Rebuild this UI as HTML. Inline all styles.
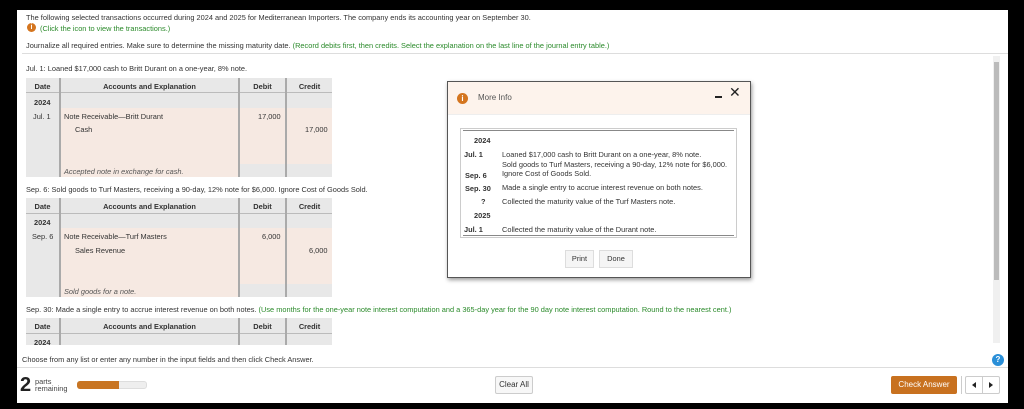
<!DOCTYPE html>
<html><head><meta charset="utf-8"><style>
*{margin:0;padding:0;box-sizing:border-box}
body{width:1024px;height:409px;background:#000;position:relative;overflow:hidden;font-family:"Liberation Sans",Arial,sans-serif;color:#333}
.a{position:absolute;white-space:nowrap}
.t{font-size:7.4px}
.g{color:#2a8a2a}
.bg{background:#e8e8e8}
.pk{background:#f6e9e2}
.vl{position:absolute;width:2px;background:#aaa}
.hd{font-size:7.4px;font-weight:bold;color:#333;text-align:center}
</style></head><body>
<div class="a" style="left:17px;top:10px;width:991px;height:393px;background:#fff"></div>
<div class="a t" style="left:26px;top:13px">The following selected transactions occurred during 2024 and 2025 for Mediterranean Importers. The company ends its accounting year on September 30.</div>
<div class="a" style="left:27px;top:23px;width:9px;height:9px;border-radius:50%;background:#d4751f;color:#fff;font-size:7px;font-weight:bold;text-align:center;line-height:9px">i</div>
<div class="a t g" style="left:40px;top:24px">(Click the icon to view the transactions.)</div>
<div class="a t" style="left:26px;top:41px">Journalize all required entries. Make sure to determine the missing maturity date. <span class="g">(Record debits first, then credits. Select the explanation on the last line of the journal entry table.)</span></div>
<div class="a" style="left:22px;top:53px;width:986px;height:1px;background:#ddd"></div>

<div class="a" style="left:993px;top:56px;width:7px;height:287px;background:#f0f0f0"></div>
<div class="a" style="left:994px;top:62px;width:5px;height:218px;background:#bbb"></div>

<div class="a t" style="left:26px;top:64px">Jul. 1: Loaned $17,000 cash to Britt Durant on a one-year, 8% note.</div>
<div class="a bg" style="left:26px;top:78px;width:306px;height:99px"></div>
<div class="a pk" style="left:61px;top:108px;width:271px;height:56px"></div>
<div class="a" style="left:61px;top:164px;width:177px;height:13px;background:#f6e9e2"></div>
<div class="a" style="left:26px;top:92px;width:306px;height:1px;background:#bbb"></div>
<div class="vl" style="left:59px;top:78px;height:99px"></div>
<div class="vl" style="left:238px;top:78px;height:99px"></div>
<div class="vl" style="left:285px;top:78px;height:99px"></div>
<div class="a hd" style="left:26px;top:82px;width:33px">Date</div>
<div class="a hd" style="left:61px;top:82px;width:177px">Accounts and Explanation</div>
<div class="a hd" style="left:240px;top:82px;width:45px">Debit</div>
<div class="a hd" style="left:287px;top:82px;width:45px">Credit</div>
<div class="a t" style="left:34px;top:98px;font-weight:bold">2024</div>
<div class="a t" style="left:33px;top:112px">Jul. 1</div>
<div class="a t" style="left:64px;top:112px">Note Receivable—Britt Durant</div>
<div class="a t" style="left:75px;top:125px">Cash</div>
<div class="a t" style="left:258px;top:112px">17,000</div>
<div class="a t" style="left:305px;top:125px">17,000</div>
<div class="a t" style="left:64px;top:167px;font-style:italic;color:#555">Accepted note in exchange for cash.</div>

<div class="a t" style="left:26px;top:185px">Sep. 6: Sold goods to Turf Masters, receiving a 90-day, 12% note for $6,000. Ignore Cost of Goods Sold.</div>
<div class="a bg" style="left:26px;top:198px;width:306px;height:99px"></div>
<div class="a pk" style="left:61px;top:228px;width:271px;height:56px"></div>
<div class="a" style="left:61px;top:284px;width:177px;height:13px;background:#f6e9e2"></div>
<div class="a" style="left:26px;top:213px;width:306px;height:1px;background:#bbb"></div>
<div class="vl" style="left:59px;top:198px;height:99px"></div>
<div class="vl" style="left:238px;top:198px;height:99px"></div>
<div class="vl" style="left:285px;top:198px;height:99px"></div>
<div class="a hd" style="left:26px;top:202px;width:33px">Date</div>
<div class="a hd" style="left:61px;top:202px;width:177px">Accounts and Explanation</div>
<div class="a hd" style="left:240px;top:202px;width:45px">Debit</div>
<div class="a hd" style="left:287px;top:202px;width:45px">Credit</div>
<div class="a t" style="left:34px;top:218px;font-weight:bold">2024</div>
<div class="a t" style="left:32px;top:232px">Sep. 6</div>
<div class="a t" style="left:64px;top:232px">Note Receivable—Turf Masters</div>
<div class="a t" style="left:75px;top:246px">Sales Revenue</div>
<div class="a t" style="left:262px;top:232px">6,000</div>
<div class="a t" style="left:309px;top:246px">6,000</div>
<div class="a t" style="left:64px;top:287px;font-style:italic;color:#555">Sold goods for a note.</div>

<div class="a t" style="left:26px;top:305px">Sep. 30: Made a single entry to accrue interest revenue on both notes. <span class="g">(Use months for the one-year note interest computation and a 365-day year for the 90 day note interest computation. Round to the nearest cent.)</span></div>
<div class="a bg" style="left:26px;top:318px;width:306px;height:27px"></div>
<div class="a" style="left:26px;top:333px;width:306px;height:1px;background:#bbb"></div>
<div class="vl" style="left:59px;top:318px;height:27px"></div>
<div class="vl" style="left:238px;top:318px;height:27px"></div>
<div class="vl" style="left:285px;top:318px;height:27px"></div>
<div class="a hd" style="left:26px;top:322px;width:33px">Date</div>
<div class="a hd" style="left:61px;top:322px;width:177px">Accounts and Explanation</div>
<div class="a hd" style="left:240px;top:322px;width:45px">Debit</div>
<div class="a hd" style="left:287px;top:322px;width:45px">Credit</div>
<div class="a t" style="left:34px;top:338px;font-weight:bold">2024</div>

<div class="a t" style="left:22px;top:355px">Choose from any list or enter any number in the input fields and then click Check Answer.</div>
<div class="a" style="left:992px;top:354px;width:12px;height:12px;border-radius:50%;background:#2a8fd8;color:#fff;font-size:8px;font-weight:bold;text-align:center;line-height:12px">?</div>
<div class="a" style="left:17px;top:367px;width:991px;height:1px;background:#ddd"></div>

<div class="a" style="left:20px;top:374px;font-size:20px;font-weight:bold;color:#222">2</div>
<div class="a" style="left:35px;top:378px;font-size:7.4px;line-height:7px;color:#444">parts<br>remaining</div>
<div class="a" style="left:77px;top:381px;width:70px;height:8px;border-radius:3px;background:#eee;border:1px solid #ddd"></div>
<div class="a" style="left:77px;top:381px;width:42px;height:8px;border-radius:3px 0 0 3px;background:#c87523"></div>
<div class="a" style="left:495px;top:376px;width:38px;height:18px;border:1px solid #ccc;border-radius:2px;background:#f7f7f7;font-size:8px;text-align:center;line-height:16px;color:#333">Clear All</div>
<div class="a" style="left:891px;top:376px;width:66px;height:18px;border-radius:2px;background:#c8711f;font-size:8px;text-align:center;line-height:18px;color:#fff">Check Answer</div>
<div class="a" style="left:961px;top:376px;width:1px;height:18px;background:#ccc"></div>
<div class="a" style="left:965px;top:376px;width:35px;height:18px;border:1px solid #ccc;border-radius:2px;background:#fff"></div>
<div class="a" style="left:982px;top:377px;width:1px;height:16px;background:#ccc"></div>
<div class="a" style="left:972px;top:382px;width:0;height:0;border-top:3px solid transparent;border-bottom:3px solid transparent;border-right:4px solid #222"></div>
<div class="a" style="left:989px;top:382px;width:0;height:0;border-top:3px solid transparent;border-bottom:3px solid transparent;border-left:4px solid #222"></div>

<div class="a" style="left:447px;top:81px;width:304px;height:197px;background:#fff;border:1px solid #555;box-shadow:1px 2px 4px rgba(0,0,0,.4)"></div>
<div class="a" style="left:448px;top:82px;width:302px;height:33px;background:#fdf3ec;border-bottom:1px solid #eee"></div>
<div class="a" style="left:457px;top:93px;width:11px;height:11px;border-radius:50%;background:#d4751f;color:#fff;font-size:8px;font-weight:bold;text-align:center;line-height:11px">i</div>
<div class="a" style="left:478px;top:93px;font-size:8px;color:#555">More Info</div>
<div class="a" style="left:715px;top:96px;width:7px;height:2px;background:#222"></div>
<div class="a" style="left:729px;top:84px;font-size:14px;color:#222">✕</div>
<div class="a" style="left:460px;top:128px;width:277px;height:110px;border:1px solid #ccc"></div>
<div class="a" style="left:463px;top:130px;width:271px;height:1px;background:#888"></div>
<div class="a" style="left:463px;top:235px;width:271px;height:1px;background:#888"></div>
<div class="a t" style="left:474px;top:136px;font-weight:bold">2024</div>
<div class="a t" style="left:464px;top:150px;font-weight:bold">Jul. 1</div>
<div class="a t" style="left:502px;top:150px">Loaned $17,000 cash to Britt Durant on a one-year, 8% note.</div>
<div class="a t" style="left:502px;top:160px">Sold goods to Turf Masters, receiving a 90-day, 12% note for $6,000.</div>
<div class="a t" style="left:465px;top:171px;font-weight:bold">Sep. 6</div>
<div class="a t" style="left:502px;top:169px">Ignore Cost of Goods Sold.</div>
<div class="a t" style="left:465px;top:184px;font-weight:bold">Sep. 30</div>
<div class="a t" style="left:502px;top:183px">Made a single entry to accrue interest revenue on both notes.</div>
<div class="a t" style="left:481px;top:197px;font-weight:bold">?</div>
<div class="a t" style="left:502px;top:197px">Collected the maturity value of the Turf Masters note.</div>
<div class="a t" style="left:474px;top:211px;font-weight:bold">2025</div>
<div class="a t" style="left:464px;top:225px;font-weight:bold">Jul. 1</div>
<div class="a t" style="left:502px;top:225px">Collected the maturity value of the Durant note.</div>
<div class="a" style="left:565px;top:250px;width:29px;height:18px;border:1px solid #ddd;background:#f5f5f5;font-size:7.4px;text-align:center;line-height:16px">Print</div>
<div class="a" style="left:599px;top:250px;width:34px;height:18px;border:1px solid #ddd;background:#f5f5f5;font-size:7.4px;text-align:center;line-height:16px">Done</div>
</body></html>
